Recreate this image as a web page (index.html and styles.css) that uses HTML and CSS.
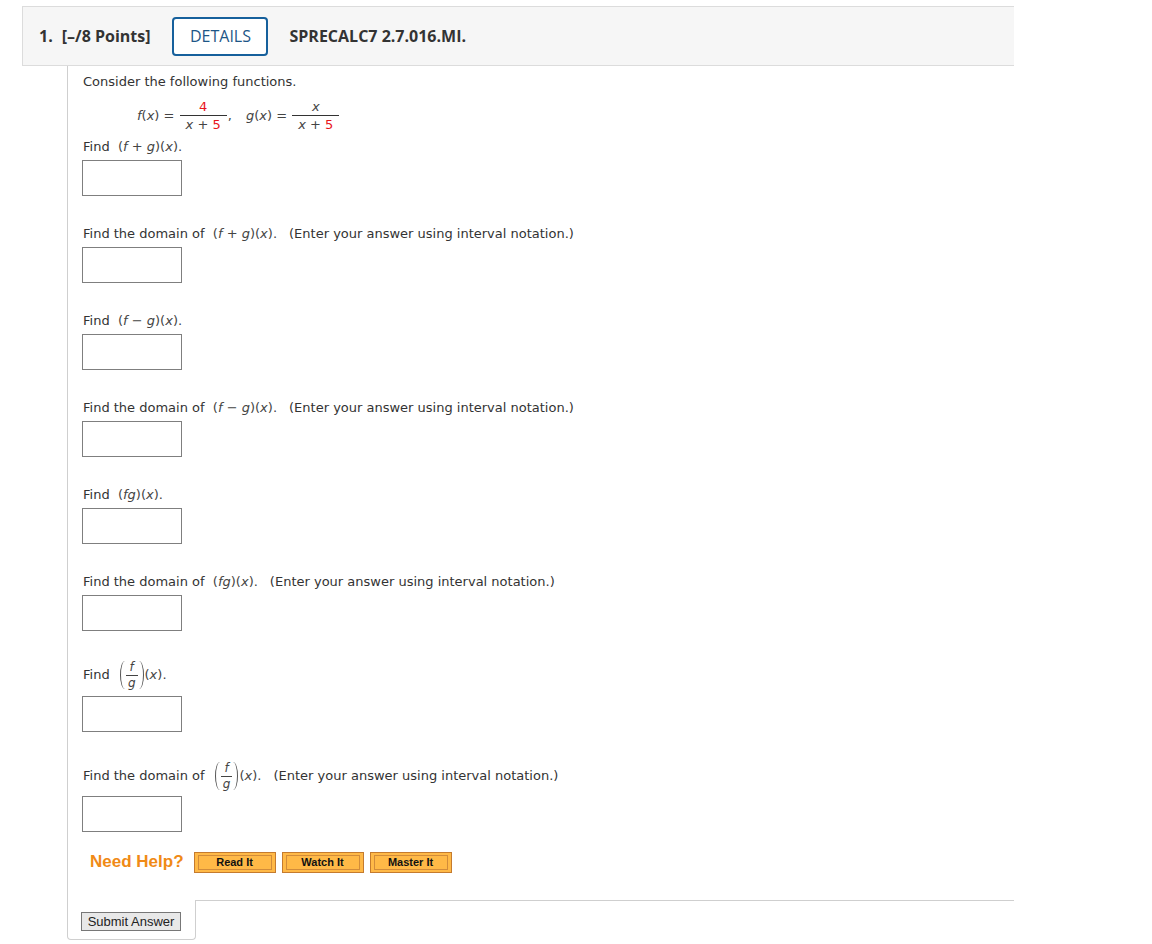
FILE: index.html
```html
<!DOCTYPE html>
<html>
<head>
<meta charset="utf-8">
<link rel="stylesheet" href="styles.css">
</head>
<body>
<div class="page">
  <div class="qhead">
    <span class="qnum">1.</span>
    <span class="pts">[–/8 Points]</span>
    <span class="details">DETAILS</span>
    <span class="code">SPRECALC7 2.7.016.MI.</span>
  </div>
  <div class="qbody">
    <div class="content">
      <p class="line">Consider the following functions.</p>
      <div class="formula">
        <span class="m">f</span><span class="mu">(<i>x</i>) = </span>
        <span class="frac"><span class="num red">4</span><span class="den"><i>x</i> + <span class="red">5</span></span></span><span class="mu">,</span>
        <span class="sp"></span>
        <i class="mu">g</i><span class="mu">(<i>x</i>) = </span>
        <span class="frac"><span class="num"><i>x</i></span><span class="den"><i>x</i> + <span class="red">5</span></span></span>
      </div>

      <div class="part">
        <p class="line">Find <span class="mu">&nbsp;(<i>f</i> + <i>g</i>)(<i>x</i>).</span></p>
        <div class="ans"></div>
      </div>
      <div class="part">
        <p class="line">Find the domain of <span class="mu">&nbsp;(<i>f</i> + <i>g</i>)(<i>x</i>).</span><span class="gap"></span>(Enter your answer using interval notation.)</p>
        <div class="ans"></div>
      </div>
      <div class="part">
        <p class="line">Find <span class="mu">&nbsp;(<i>f</i> − <i>g</i>)(<i>x</i>).</span></p>
        <div class="ans"></div>
      </div>
      <div class="part">
        <p class="line">Find the domain of <span class="mu">&nbsp;(<i>f</i> − <i>g</i>)(<i>x</i>).</span><span class="gap"></span>(Enter your answer using interval notation.)</p>
        <div class="ans"></div>
      </div>
      <div class="part">
        <p class="line">Find <span class="mu">&nbsp;(<i>fg</i>)(<i>x</i>).</span></p>
        <div class="ans"></div>
      </div>
      <div class="part">
        <p class="line">Find the domain of <span class="mu">&nbsp;(<i>fg</i>)(<i>x</i>).</span><span class="gap"></span>(Enter your answer using interval notation.)</p>
        <div class="ans"></div>
      </div>
      <div class="part">
        <p class="line tall">Find&nbsp; <span class="lparen"></span><span class="frac small"><span class="num"><i>f</i></span><span class="den"><i>g</i></span></span><span class="rparen"></span><span class="mu">(<i>x</i>).</span></p>
        <div class="ans"></div>
      </div>
      <div class="part last">
        <p class="line tall">Find the domain of&nbsp; <span class="lparen"></span><span class="frac small"><span class="num"><i>f</i></span><span class="den"><i>g</i></span></span><span class="rparen"></span><span class="mu">(<i>x</i>).</span><span class="gap"></span>(Enter your answer using interval notation.)</p>
        <div class="ans"></div>
      </div>

      <div class="help">
        <span class="needhelp">Need Help?</span>
        <span class="hbtn"><span>Read It</span></span>
        <span class="hbtn"><span>Watch It</span></span>
        <span class="hbtn"><span>Master It</span></span>
      </div>
    </div>
    <div class="footer">
      <div class="submit-tab"><span class="submit">Submit Answer</span></div>
      <div class="filler"></div>
    </div>
  </div>
</div>
</body>
</html>
```

FILE: styles.css
```css
html, body {
  margin: 0;
  padding: 0;
  background: #fff;
}
.page {
  padding: 6px 0 0 22px;
  width: 992px;
}
.qhead {
  display: flex;
  align-items: center;
  background: #f6f6f6;
  border-top: 1px solid #dcdcdc;
  border-bottom: 1px solid #dcdcdc;
  border-left: 1px solid #dcdcdc;
  font-family: "Open Sans", sans-serif;
  font-size: 16px;
  color: #333;
  padding-left: 16px;
  box-sizing: border-box;
  height: 60px;
}
.qnum {
  font-weight: bold;
  margin-right: 9px;
}
.pts {
  font-weight: bold;
  margin-right: 22px;
}
.details {
  display: flex;
  align-items: center;
  justify-content: center;
  width: 96px;
  height: 39px;
  box-sizing: border-box;
  border: 2px solid #16609c;
  border-radius: 4px;
  color: #1d5687;
  font-size: 16px;
  margin-right: 21px;
  background: #fff;
}
.code {
  font-weight: bold;
  font-size: 16px;
}
.qbody {
  margin-left: 45px;
}
.content {
  border-left: 1px solid #cfcfcf;
  padding: 7px 0 28px 15px;
  font-family: "DejaVu Sans", Verdana, sans-serif;
  font-size: 13px;
  color: #333;
}
.line {
  margin: 0;
  line-height: 18px;
  height: 18px;
  display: flex;
  align-items: center;
  white-space: pre;
}
.line.tall {
  height: 30px;
  line-height: 30px;
}
.gap {
  display: inline-block;
  width: 12px;
}
.mu {
  color: #444;
}
.m {
  font-style: italic;
  color: #444;
}
i {
  font-style: italic;
}
.red {
  color: #e8141b;
}
.formula {
  display: flex;
  align-items: center;
  margin: 8px 0 7px 54px;
  height: 32px;
  white-space: pre;
  color: #444;
}
.frac {
  display: inline-flex;
  flex-direction: column;
  align-items: center;
  line-height: 15px;
  margin: 0 1px;
}
.frac .num {
  padding: 0 6px 1px;
  border-bottom: 1px solid #333;
  align-self: stretch;
  text-align: center;
}
.frac .den {
  padding: 1px 6px 0;
}
.frac.small {
  line-height: 13px;
  font-size: 12px;
  color: #444;
  margin: 0 1px;
}
.frac.small .num {
  padding: 0 2px 1px;
  border-bottom: 1px solid #444;
}
.frac.small .den {
  padding: 1px 2px 0;
}
.lparen, .rparen {
  display: inline-block;
  width: 5px;
  height: 28px;
  box-sizing: border-box;
}
.lparen {
  border-left: 1.4px solid #555;
  border-radius: 100% 0 0 100% / 50% 0 0 50%;
  margin-left: 2px;
}
.rparen {
  border-right: 1.4px solid #555;
  border-radius: 0 100% 100% 0 / 0 50% 50% 0;
  margin-right: 1px;
}
.sp {
  display: inline-block;
  width: 14px;
}
.ans {
  width: 100px;
  height: 36px;
  box-sizing: border-box;
  border: 1px solid #7f7f7f;
  margin: 4px 0 29px -1px;
  background: #fff;
}
.line.tall + .ans {
  margin-top: 6px;
}
.part.last .line.tall + .ans {
  margin-top: 5px;
}
.help {
  display: flex;
  align-items: center;
  gap: 6px;
  padding-left: 7px;
  margin-top: -9px;
  height: 20px;
}
.needhelp {
  font-family: "Liberation Sans", Arial, sans-serif;
  font-weight: bold;
  font-size: 17px;
  color: #f08a16;
  margin-right: 4px;
}
.hbtn {
  display: flex;
  width: 82px;
  height: 21px;
  box-sizing: border-box;
  border: 1px solid #c57b2e;
  background: #ffb947;
  padding: 2px 3px;
}
.hbtn span {
  flex: 1;
  display: flex;
  align-items: center;
  justify-content: center;
  border: 1px solid #d28c3a;
  font-family: "Liberation Sans", Arial, sans-serif;
  font-weight: bold;
  font-size: 11px;
  color: #111;
}
.footer {
  display: flex;
}
.submit-tab {
  width: 129px;
  height: 40px;
  box-sizing: border-box;
  border-left: 1px solid #cfcfcf;
  border-right: 1px solid #cfcfcf;
  border-bottom: 1px solid #cfcfcf;
  border-radius: 0 0 4px 4px;
  padding: 12px 0 0 13px;
}
.submit {
  display: inline-flex;
  align-items: center;
  justify-content: center;
  width: 100px;
  height: 19px;
  box-sizing: border-box;
  border: 1px solid #777;
  background: #e8e8e8;
  font-family: "Liberation Sans", Arial, sans-serif;
  font-size: 13px;
  color: #222;
}
.filler {
  flex: 1;
  border-top: 1px solid #cfcfcf;
}
```
